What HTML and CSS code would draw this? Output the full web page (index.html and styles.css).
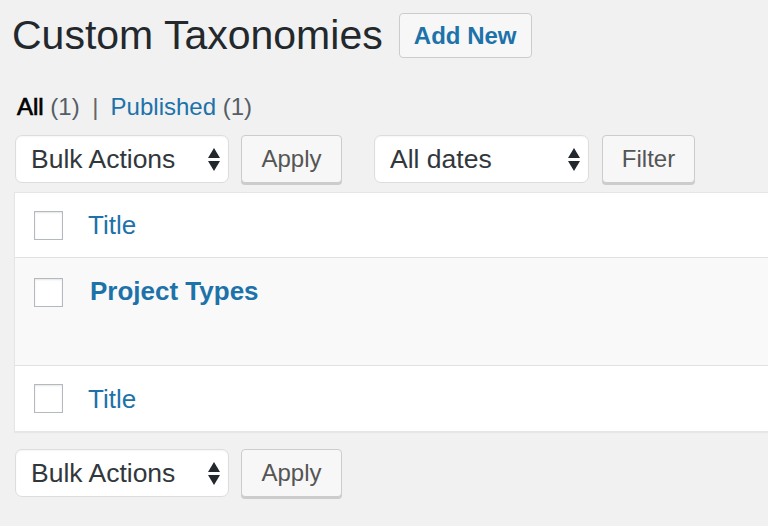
FILE: index.html
```html
<!DOCTYPE html>
<html lang="en">
<head>
<meta charset="utf-8">
<title>Custom Taxonomies</title>
<link rel="stylesheet" href="styles.css">
</head>
<body>
<div class="wrap">
  <div class="page-header">
    <h1 class="page-title">Custom Taxonomies</h1>
    <a class="btn-add" href="#">Add New</a>
  </div>

  <ul class="subsubsub">
    <li><span class="current">All</span> <span class="count">(1)</span> <span class="sep">|</span></li>
    <li><a href="#">Published</a> <span class="count">(1)</span></li>
  </ul>

  <div class="tablenav top">
    <div class="select bulk">
      <span class="select-label">Bulk Actions</span>
      <svg class="select-arrows" width="12" height="23" viewBox="0 0 12 23"><polygon points="0,10 6,0 12,10"/><polygon points="0,13 12,13 6,23"/></svg>
    </div>
    <button class="btn apply">Apply</button>
    <div class="select dates">
      <span class="select-label">All dates</span>
      <svg class="select-arrows" width="12" height="23" viewBox="0 0 12 23"><polygon points="0,10 6,0 12,10"/><polygon points="0,13 12,13 6,23"/></svg>
    </div>
    <button class="btn filter">Filter</button>
  </div>

  <div class="list-table">
    <div class="row head">
      <div class="cell-check"><span class="checkbox"></span></div>
      <a class="col-title" href="#">Title</a>
    </div>
    <div class="row item">
      <div class="cell-check"><span class="checkbox"></span></div>
      <a class="row-title" href="#">Project Types</a>
    </div>
    <div class="row foot">
      <div class="cell-check"><span class="checkbox"></span></div>
      <a class="col-title" href="#">Title</a>
    </div>
  </div>

  <div class="tablenav bottom">
    <div class="select bulk">
      <span class="select-label">Bulk Actions</span>
      <svg class="select-arrows" width="12" height="23" viewBox="0 0 12 23"><polygon points="0,10 6,0 12,10"/><polygon points="0,13 12,13 6,23"/></svg>
    </div>
    <button class="btn apply">Apply</button>
  </div>
</div>
</body>
</html>
```

FILE: styles.css
```css
html, body {
  margin: 0;
  padding: 0;
}
body {
  background: #f1f1f1;
  font-family: "Liberation Sans", Arial, sans-serif;
  color: #444;
  overflow: hidden;
  width: 768px;
  height: 526px;
}
a {
  text-decoration: none;
  color: #1d72aa;
}
.wrap {
  padding: 13px 0 0 14px;
}
.page-header {
  display: flex;
  align-items: center;
  height: 45px;
}
.page-title {
  margin: 0 0 0 -2px;
  font-size: 41px;
  font-weight: 400;
  line-height: 45px;
  color: #23282d;
}
.btn-add {
  box-sizing: border-box;
  margin-left: 16px;
  height: 45px;
  width: 133px;
  display: flex;
  align-items: center;
  justify-content: center;
  border: 1px solid #ccc;
  border-radius: 4px;
  background: #f7f7f7;
  font-size: 24px;
  font-weight: 700;
  color: #1d72aa;
}
.subsubsub {
  list-style: none;
  margin: 33px 0 0 0;
  padding: 0 0 0 3px;
  display: flex;
  font-size: 24px;
  line-height: 32px;
  color: #666;
  white-space: pre;
}
.subsubsub .current {
  color: #000;
  -webkit-text-stroke: 0.7px #000;
}
.subsubsub .count {
  color: #555d66;
}
.subsubsub .sep {
  color: #666;
  margin: 0 12px 0 6px;
}
.tablenav {
  display: flex;
  align-items: flex-start;
  height: 50px;
}
.tablenav.top {
  margin-top: 12px;
}
.tablenav.bottom {
  margin-top: 17px;
}
.select {
  box-sizing: border-box;
  height: 48px;
  display: flex;
  align-items: center;
  justify-content: space-between;
  background: #fff;
  border: 1px solid #ddd;
  border-radius: 7px;
  padding: 0 8px 0 15px;
  box-shadow: inset 0 1px 2px rgba(0, 0, 0, 0.04);
}
.select.bulk {
  margin-left: 1px;
  width: 214px;
}
.select.dates {
  margin-left: 32px;
  width: 215px;
}
.select-label {
  font-size: 26.5px;
  color: #32373c;
}
.select-arrows {
  fill: #23282d;
}
.btn {
  box-sizing: border-box;
  height: 48px;
  margin: 0;
  padding: 0;
  border: 1px solid #ccc;
  border-radius: 4px;
  background: #f7f7f7;
  box-shadow: 0 2px 0 #ccc;
  font-family: "Liberation Sans", Arial, sans-serif;
  font-size: 24px;
  color: #555;
}
.btn.apply {
  margin-left: 12px;
  width: 101px;
}
.btn.filter {
  margin-left: 13px;
  width: 93px;
}
.list-table {
  margin-top: 7px;
  background: #fff;
  border: 1px solid #e5e5e5;
  border-right: none;
  box-shadow: 0 1px 1px rgba(0, 0, 0, 0.04);
}
.row {
  display: flex;
  align-items: center;
}
.row.head {
  height: 64px;
  border-bottom: 1px solid #e1e1e1;
}
.row.item {
  height: 107px;
  align-items: flex-start;
  background: #f9f9f9;
}
.row.foot {
  height: 65px;
  border-top: 1px solid #e1e1e1;
}
.cell-check {
  width: 73px;
  flex: none;
  display: flex;
}
.checkbox {
  box-sizing: border-box;
  display: block;
  width: 29px;
  height: 29px;
  margin-left: 19px;
  background: #fff;
  border: 1px solid #b4b9be;
  box-shadow: inset 0 1px 2px rgba(0, 0, 0, 0.1);
}
.row.item .checkbox {
  margin-top: 20px;
}
.col-title {
  font-size: 26px;
  line-height: 30px;
}
.row-title {
  margin-top: 18px;
  padding-left: 2px;
  font-size: 26px;
  line-height: 30px;
  font-weight: 700;
}
```
